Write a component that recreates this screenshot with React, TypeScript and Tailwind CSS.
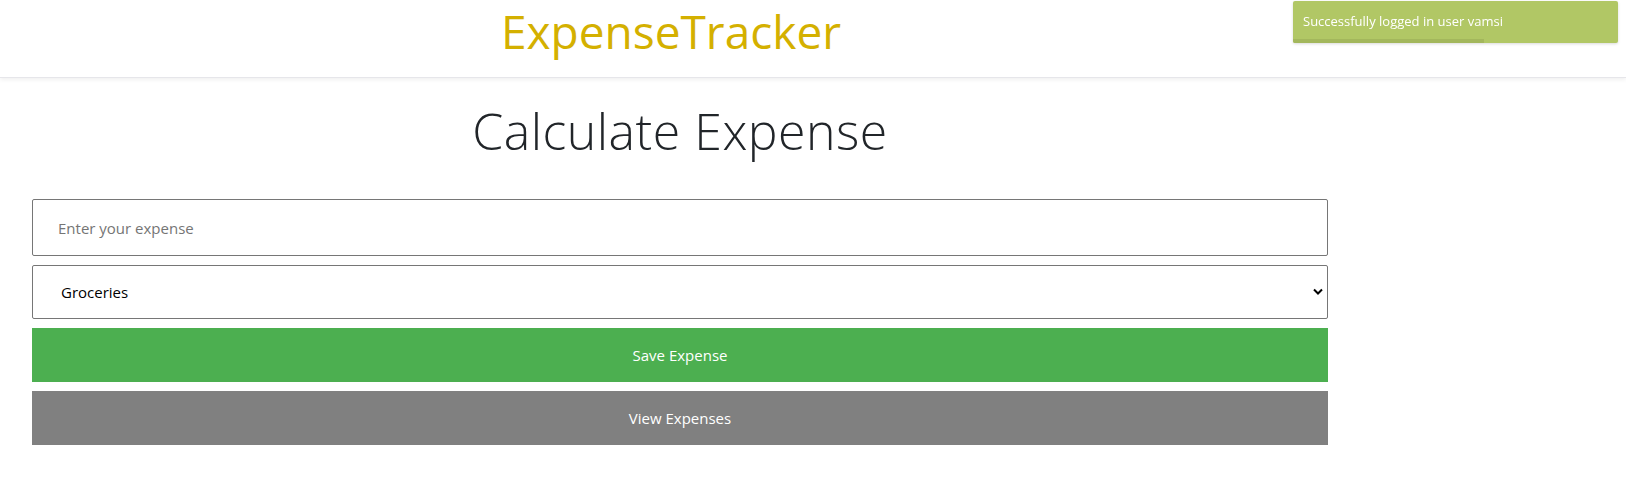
import { useState } from "react";

const font = { fontFamily: '"Open Sans", "Noto Sans", sans-serif' };

function Toast() {
  return (
    <div className="fixed right-[8px] top-[1px] w-[325px] overflow-hidden rounded-[2px] bg-[#b1c765] shadow-[0_1px_3px_rgba(0,0,0,0.15)]">
      <div className="flex h-[38px] items-center pl-[10px] pt-[3px] text-[13px] text-white">
        Successfully logged in user vamsi
      </div>
      <div className="h-[4px] w-[191px] bg-[#a3b75c]" />
    </div>
  );
}

export default function App() {
  const [amount, setAmount] = useState("");
  const [category, setCategory] = useState("Groceries");

  return (
    <div className="min-h-[484px] bg-white text-[#212529]" style={font}>
      <header className="flex h-[78px] w-full border-b border-[#e6e6ea] shadow-[0_2px_4px_rgba(0,0,0,0.06)]">
        <div className="flex w-[1342px] justify-center pt-[1px]">
          <span className="text-[46px] leading-[60px] text-[#d4b000]">ExpenseTracker</span>
        </div>
      </header>
      <Toast />

      <main className="ml-[32px] flex w-[1296px] flex-col">
        <h1 className="mt-[21px] text-center text-[50px] font-light leading-[64px] tracking-[0.5px] text-[#212529]">
          Calculate Expense
        </h1>

        <div className="mt-[36px] flex flex-col gap-[9px]">
          <input
            value={amount}
            onChange={(e) => setAmount(e.target.value)}
            placeholder="Enter your expense"
            className="h-[57px] w-full rounded-[2px] border border-[#767676] px-[25px] text-[15px] text-black outline-none placeholder:text-[#757575]"
          />
          <div className="relative">
            <select
              value={category}
              onChange={(e) => setCategory(e.target.value)}
              className="h-[54px] w-full appearance-none rounded-[2px] border border-[#767676] bg-white px-[28px] text-[15px] text-black outline-none"
            >
              <option>Groceries</option>
              <option>Rent</option>
              <option>Travel</option>
              <option>Entertainment</option>
            </select>
            <svg
              className="pointer-events-none absolute right-[5px] top-[23px]"
              width="10"
              height="8"
              viewBox="0 0 10 8"
            >
              <path d="M1 1.5 L5 5.5 L9 1.5" fill="none" stroke="#000" strokeWidth="2" />
            </svg>
          </div>
          <button className="h-[54px] w-full bg-[#4caf50] text-[15px] text-white">Save Expense</button>
          <button className="h-[54px] w-full bg-[#808080] text-[15px] text-white">View Expenses</button>
        </div>
      </main>
    </div>
  );
}
